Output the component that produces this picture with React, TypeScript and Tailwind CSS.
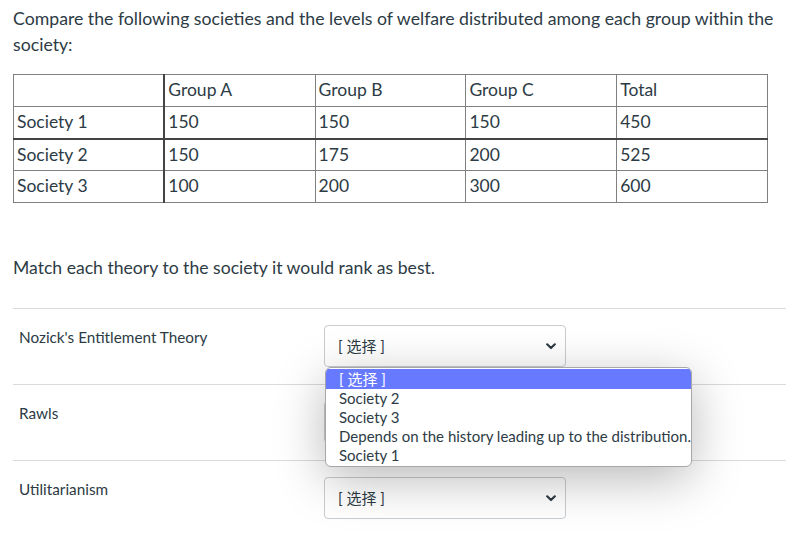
import React from "react";

const rows = [
  { name: "Society 1", a: "150", b: "150", c: "150", total: "450" },
  { name: "Society 2", a: "150", b: "175", c: "200", total: "525" },
  { name: "Society 3", a: "100", b: "200", c: "300", total: "600" },
];

const options = [
  "[ 选择 ]",
  "Society 2",
  "Society 3",
  "Depends on the history leading up to the distribution.",
  "Society 1",
];

const Chevron = () => (
  <svg width="10" height="7" viewBox="0 0 10 7" className="shrink-0">
    <path d="M1.2 1.3 L5 5 L8.8 1.3" fill="none" stroke="#2d3b45" strokeWidth="2.2" strokeLinecap="round" strokeLinejoin="round" />
  </svg>
);

const SelectBox = ({ open }: { open?: boolean }) => (
  <div className="relative">
    <div className="w-[242px] h-[42px] border border-[#c7cdd1] rounded-[4px] bg-white flex items-center justify-between pl-[13px] pr-[9px] text-[15px]">
      <span>[ 选择 ]</span>
      <Chevron />
    </div>
    {open && (
      <div className="absolute left-[1px] top-[42px] z-10 w-[367px] bg-white border border-[#a7a7a7] rounded-[6px] overflow-hidden shadow-[0_12px_50px_rgba(0,0,0,0.28)] text-[15px] py-[1px]">
        {options.map((o, i) => (
          <div
            key={o}
            className={
              i === 0
                ? "bg-[#6679ff] text-white pl-[13px] h-[20px] leading-[20px] whitespace-nowrap overflow-hidden"
                : "pl-[13px] h-[19px] leading-[19px] whitespace-nowrap overflow-hidden"
            }
          >
            {o}
          </div>
        ))}
      </div>
    )}
  </div>
);

const MatchRow = ({ label, open }: { label: string; open?: boolean }) => (
  <div className="border-t border-[#dadada] flex h-[76px] pt-[16px]">
    <div className="w-[311px] pl-[6px] pt-[2px] text-[15.3px] leading-[20px]">{label}</div>
    <SelectBox open={open} />
  </div>
);

export default function App() {
  const cell = "border border-[#808080] px-[3px] h-[32px] text-left font-normal align-middle";
  return (
    <div className="w-[796px] h-[547px] bg-white overflow-hidden font-['Lato','Noto_Sans_CJK_SC',sans-serif] text-[#2d3b45]">
      <div className="pl-[13px] pt-[6px] w-[786px]">
        <p className="text-[17.7px] leading-[26px] pr-[10px]">
          Compare the following societies and the levels of welfare distributed among each group within the society:
        </p>
        <table className="mt-[16px] border-collapse w-[755px] table-fixed text-[17.5px]">
          <thead>
            <tr>
              <th className={cell + " border-r-2 border-r-[#444]"}></th>
              <th className={cell}>Group A</th>
              <th className={cell}>Group B</th>
              <th className={cell}>Group C</th>
              <th className={cell}>Total</th>
            </tr>
          </thead>
          <tbody>
            {rows.map((r, i) => {
              const extra = i === 0 ? " border-b-2 border-b-[#444]" : "";
              return (
                <tr key={r.name}>
                  <td className={cell + " border-r-2 border-r-[#444]" + extra}>{r.name}</td>
                  <td className={cell + extra}>{r.a}</td>
                  <td className={cell + extra}>{r.b}</td>
                  <td className={cell + extra}>{r.c}</td>
                  <td className={cell + extra}>{r.total}</td>
                </tr>
              );
            })}
          </tbody>
        </table>
        <p className="mt-[52px] text-[17.6px] leading-[26px]">Match each theory to the society it would rank as best.</p>
        <div className="mt-[27px]">
          <MatchRow label="Nozick's Entitlement Theory" open />
          <MatchRow label="Rawls" />
          <MatchRow label="Utilitarianism" />
        </div>
      </div>
    </div>
  );
}
